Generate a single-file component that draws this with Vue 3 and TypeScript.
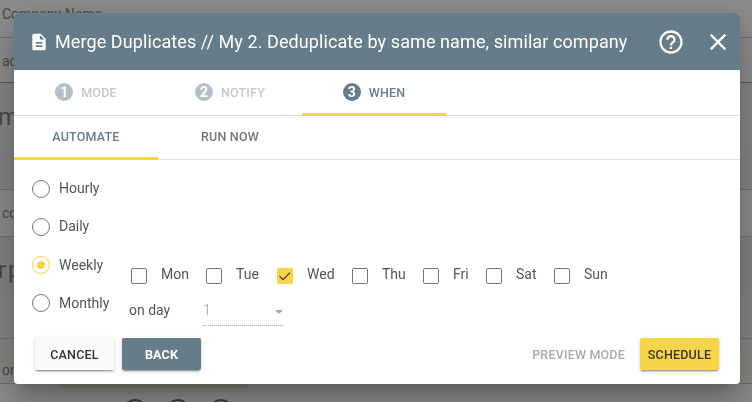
<script setup lang="ts">
import { ref } from "vue";

const steps = [
  { n: 1, label: "MODE", active: false },
  { n: 2, label: "NOTIFY", active: false },
  { n: 3, label: "WHEN", active: true },
];
const frequency = ref("Weekly");
const frequencies = ["Hourly", "Daily", "Weekly", "Monthly"];
const days = [
  { name: "Mon", width: 28, gap: 17 },
  { name: "Tue", width: 22, gap: 19 },
  { name: "Wed", width: 27, gap: 18 },
  { name: "Thu", width: 23, gap: 18 },
  { name: "Fri", width: 15, gap: 18 },
  { name: "Sat", width: 20, gap: 18 },
  { name: "Sun", width: 23, gap: 0 },
];
const checked = ref(["Wed"]);
</script>

<template>
  <div class="page">
    <div class="row r1"><span class="small">Company Name</span></div>
    <div class="row r2"><span class="small">ac</span></div>
    <div class="row r3"><span class="big">m</span></div>
    <div class="row r4"></div>
    <div class="row r5"><span class="small">cor</span></div>
    <div class="row r6"><span class="big">r p</span></div>
    <div class="row r7"></div>
    <div class="row r8"><span class="small">on</span><div class="strip"></div></div>
    <div class="row r9">
      <i class="dot"></i><i class="dot"></i><i class="dot"></i>
    </div>
  </div>

  <div class="overlay">
    <div class="dialog">
      <header class="head">
        <svg class="doc" viewBox="0 0 24 24" width="20" height="20">
          <path fill="#fff" d="M14 2H6c-1.1 0-1.99.9-1.99 2L4 20c0 1.1.89 2 1.99 2H18c1.1 0 2-.9 2-2V8l-6-6zm2 16H8v-2h8v2zm0-4H8v-2h8v2zm-3-5V3.5L18.5 9H13z" />
        </svg>
        <h1 class="title">Merge Duplicates // My 2. Deduplicate by same name, similar company</h1>
        <svg class="help" viewBox="0 0 24 24" width="28" height="28">
          <path fill="#fff" d="M11 18h2v-2h-2v2zm1-16C6.48 2 2 6.48 2 12s4.48 10 10 10 10-4.48 10-10S17.52 2 12 2zm0 18c-4.41 0-8-3.59-8-8s3.59-8 8-8 8 3.59 8 8-3.59 8-8 8zm0-14c-2.21 0-4 1.79-4 4h2c0-1.1.9-2 2-2s2 .9 2 2c0 2-3 1.75-3 5h2c0-2.25 3-2.5 3-5 0-2.21-1.79-4-4-4z" />
        </svg>
        <svg class="close" viewBox="0 0 24 24" width="28" height="28">
          <path fill="#fff" d="M19 6.41L17.59 5 12 10.59 6.41 5 5 6.41 10.59 12 5 17.59 6.41 19 12 13.41 17.59 19 19 17.59 13.41 12z" />
        </svg>
      </header>

      <div class="steps">
        <div v-for="s in steps" :key="s.n" class="step" :class="{ on: s.active }">
          <span class="num">{{ s.n }}</span>
          <span>{{ s.label }}</span>
        </div>
      </div>

      <div class="tabs">
        <div class="tab on">AUTOMATE</div>
        <div class="tab">RUN NOW</div>
      </div>

      <div class="schedule">
        <div class="radios">
          <div v-for="f in frequencies" :key="f" class="radio" :class="{ on: frequency === f }" @click="frequency = f">
            <span class="ring"></span>
            <span class="radiolabel">{{ f }}</span>
          </div>
        </div>
        <div class="options">
          <div class="days">
            <div v-for="d in days" :key="d.name" class="day" :style="{ marginRight: d.gap + 'px' }">
              <span class="box" :class="{ on: checked.includes(d.name) }">
                <svg v-if="checked.includes(d.name)" viewBox="0 0 16 16" width="16" height="16">
                  <path fill="none" stroke="#333" stroke-width="1.1" d="M2.6 8.2l3.4 3.4 7-7" />
                </svg>
              </span>
              <span class="dayname" :style="{ width: d.width + 'px' }">{{ d.name }}</span>
            </div>
          </div>
          <div class="onday">
            <span class="ondaylabel">on day</span>
            <div class="select">
              <span>1</span>
              <i class="arrow"></i>
            </div>
          </div>
        </div>
      </div>

      <footer class="foot">
        <button class="btn cancel">CANCEL</button>
        <button class="btn back">BACK</button>
        <span class="preview">PREVIEW MODE</span>
        <button class="btn sched">SCHEDULE</button>
      </footer>
    </div>
  </div>
</template>

<style>
html, body {
  margin: 0;
  height: 100%;
  overflow: hidden;
  background: #fff;
}
</style>

<style scoped>
.page {
  height: 402px;
  overflow: hidden;
  font-family: Roboto, sans-serif;
  color: #888;
}
.row {
  box-sizing: border-box;
  border-bottom: 1px solid #ccc;
  position: relative;
  padding-left: 2px;
}
.small {
  font-size: 14px;
  font-weight: 400;
}
.big {
  font-size: 24px;
  margin-left: -4px;
  white-space: nowrap;
  word-spacing: -4px;
}
.r1 { height: 38px; padding-top: 4px; }
.r2 { height: 45px; padding-top: 13px; border-bottom-color: #aaa; }
.r3 { height: 64px; background: #f4f4f4; padding-top: 20px; border-bottom: none; }
.r4 { height: 43px; background: #f0f0f0; }
.r5 { height: 47px; padding-top: 13px; }
.r6 { height: 58px; background: #eee; padding-top: 19px; border-bottom: none; }
.r7 { height: 44px; background: #f2f2f2; }
.r8 { height: 45px; background: #f5f5ee; padding-top: 21px; }
.strip {
  position: absolute;
  left: 60px;
  width: 188px;
  bottom: -5px;
  height: 5px;
  background: #f0ecd4;
}
.r9 {
  height: 18px;
  display: flex;
  gap: 19px;
  padding-left: 123px;
  padding-top: 15px;
  border: none;
}
.dot {
  flex: none;
  width: 20px;
  height: 20px;
  border: 2px solid #666;
  border-radius: 50%;
}

.overlay {
  position: fixed;
  inset: 0;
  background: rgba(0, 0, 0, 0.45);
  padding: 13px 0 0 14px;
  box-sizing: border-box;
}
.dialog {
  width: 726px;
  height: 371px;
  background: #fff;
  border-radius: 4px;
  overflow: hidden;
  display: flex;
  flex-direction: column;
  font-family: Roboto, sans-serif;
  box-shadow: 0 11px 15px -7px rgba(0, 0, 0, 0.2), 0 24px 38px 3px rgba(0, 0, 0, 0.14), 0 9px 46px 8px rgba(0, 0, 0, 0.12);
}
.head {
  height: 57px;
  flex: none;
  background: #667c89;
  display: flex;
  align-items: center;
  padding: 0 8px 0 15px;
  color: #fff;
}
.doc {
  flex: none;
  margin-top: 1px;
}
.title {
  margin: 0 0 0 6px;
  font-size: 18px;
  font-weight: 400;
  white-space: nowrap;
  flex: 1;
  letter-spacing: 0.09px;
}
.help {
  flex: none;
  margin-right: 19.5px;
}
.close {
  flex: none;
}
.steps {
  height: 46px;
  flex: none;
  display: flex;
  border-bottom: 1px solid #e0e0e0;
  box-sizing: border-box;
}
.step {
  width: 144px;
  box-sizing: border-box;
  display: flex;
  align-items: center;
  justify-content: center;
  gap: 8px;
  font-size: 12.5px;
  letter-spacing: 0.2px;
  font-weight: 500;
  color: #c8c8c8;
  border-bottom: 3px solid transparent;
  margin-bottom: -1px;
  padding-top: 1px;
}
.step.on {
  color: #667c89;
  border-bottom-color: #f7d549;
}
.num {
  flex: none;
  width: 18px;
  height: 18px;
  border-radius: 50%;
  background: #b3c0c7;
  color: #fff;
  font-size: 14px;
  font-weight: 700;
  letter-spacing: 0;
  display: flex;
  align-items: center;
  justify-content: center;
}
.step.on .num {
  background: #667c89;
}
.tabs {
  height: 44px;
  flex: none;
  display: flex;
  border-bottom: 1px solid #e0e0e0;
  box-sizing: border-box;
}
.tab {
  width: 144px;
  box-sizing: border-box;
  display: flex;
  align-items: center;
  justify-content: center;
  font-size: 12.5px;
  letter-spacing: 0.2px;
  font-weight: 500;
  color: #757575;
  margin-bottom: -1px;
  border-bottom: 3px solid transparent;
}
.tab.on {
  color: #667c89;
  border-bottom-color: #f7d549;
}
.schedule {
  display: flex;
  padding: 20px 0 0 18px;
  height: 178px;
  box-sizing: border-box;
  flex: none;
}
.radios {
  display: flex;
  flex-direction: column;
  gap: 20px;
  width: 96px;
  flex: none;
}
.radio {
  height: 18px;
  display: flex;
  align-items: center;
  gap: 9px;
  font-size: 14px;
  color: #555;
  white-space: nowrap;
}
.radiolabel {
  margin-top: -2px;
}
.radio:nth-child(n + 3) .radiolabel {
  margin-top: 0;
}
.ring {
  width: 18px;
  height: 18px;
  box-sizing: border-box;
  border: 1px solid #777;
  border-radius: 50%;
  flex: none;
  position: relative;
}
.radio.on .ring {
  border-color: #f7d549;
}
.radio.on .ring::after {
  content: "";
  position: absolute;
  inset: 4px;
  border-radius: 50%;
  background: #f7d549;
}
.options {
  padding-top: 88px;
}
.days {
  display: flex;
  padding-left: 3px;
  height: 16px;
  margin-bottom: 16px;
}
.day {
  display: flex;
  align-items: center;
  gap: 14px;
}
.box {
  width: 16px;
  height: 16px;
  box-sizing: border-box;
  border: 1px solid #777;
  border-radius: 2px;
  flex: none;
  display: block;
}
.box.on {
  background: #f7d549;
  border: none;
}
.box svg {
  display: block;
}
.dayname {
  font-size: 14px;
  color: #555;
  margin-top: -5px;
  white-space: nowrap;
}
.onday {
  display: flex;
  align-items: flex-start;
  padding-left: 1px;
  font-size: 14px;
  color: #555;
}
.ondaylabel {
  width: 74px;
  line-height: 20px;
  flex: none;
}
.select {
  width: 80px;
  height: 26px;
  box-sizing: border-box;
  border-bottom: 1px dotted #aaa;
  color: #bbb;
  line-height: 20px;
  position: relative;
}
.arrow {
  position: absolute;
  right: 0;
  top: 10px;
  border-left: 4px solid transparent;
  border-right: 4px solid transparent;
  border-top: 4px solid #aaa;
}
.foot {
  display: flex;
  align-items: center;
  padding: 0 21px 0 21px;
  height: 32px;
}
.btn {
  width: 79px;
  height: 32px;
  border: none;
  border-radius: 2px;
  font-family: Roboto, sans-serif;
  font-size: 12.5px;
  letter-spacing: 0.2px;
  padding: 0;
  box-shadow: 0 3px 1px -2px rgba(0, 0, 0, 0.2), 0 2px 2px 0 rgba(0, 0, 0, 0.14), 0 1px 5px 0 rgba(0, 0, 0, 0.12);
}
.cancel {
  background: #fafafa;
  color: #333;
  font-weight: 500;
}
.back {
  background: #667c89;
  color: #fff;
  font-weight: 700;
  margin-left: 8px;
}
.preview {
  margin-left: auto;
  font-size: 12.5px;
  letter-spacing: 0.2px;
  font-weight: 500;
  color: #aaa;
  margin-right: 15px;
}
.sched {
  background: #f7d549;
  color: #333;
  font-weight: 500;
}
</style>
